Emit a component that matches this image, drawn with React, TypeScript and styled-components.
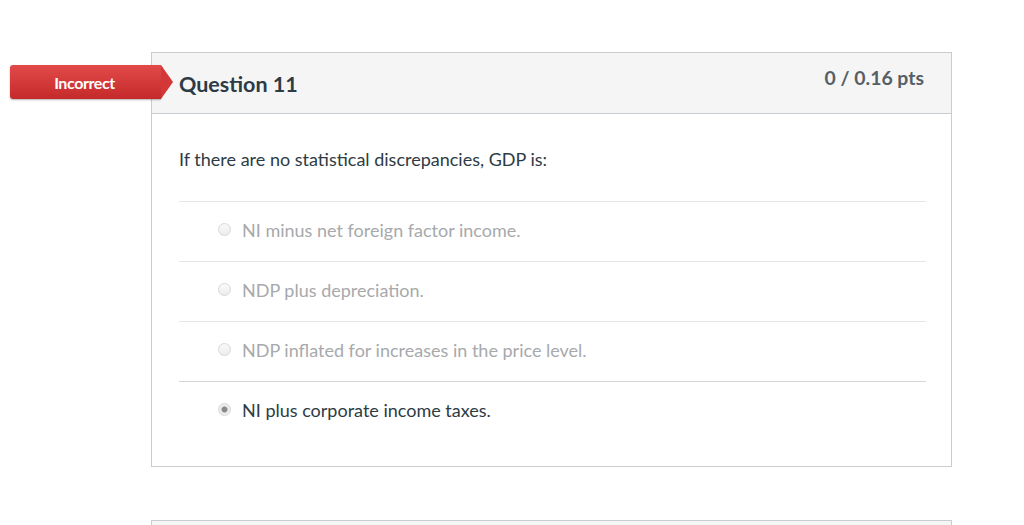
import React from "react";
import styled, { createGlobalStyle } from "styled-components";

const GlobalStyle = createGlobalStyle`
    body {
        margin: 0;
        background: #fff;
        font-family: Lato, "Open Sans", sans-serif;
        color: #2d3b45;
    }
`;

type Answer = { text: string; selected?: boolean };

const answers: Answer[] = [
    { text: "NI minus net foreign factor income." },
    { text: "NDP plus depreciation." },
    { text: "NDP inflated for increases in the price level." },
    { text: "NI plus corporate income taxes.", selected: true },
];

function App() {
    return (
        <Page>
            <GlobalStyle />
            <Card>
                <Badge>Incorrect</Badge>
                <Header>
                    <Title>Question 11</Title>
                    <Points>0 / 0.16 pts</Points>
                </Header>
                <Body>
                    <QuestionText>
                        If there are no statistical discrepancies, GDP is:
                    </QuestionText>
                    <AnswerList>
                        {answers.map((a) => (
                            <AnswerRow key={a.text}>
                                <Radio $selected={!!a.selected} />
                                <AnswerText $selected={!!a.selected}>
                                    {a.text}
                                </AnswerText>
                            </AnswerRow>
                        ))}
                    </AnswerList>
                </Body>
            </Card>
            <NextCard />
        </Page>
    );
}

export default App;

const Page = styled.div`
    display: flex;
    flex-direction: column;
    gap: 53px;
    padding: 52px 0 0 151px;
    height: 525px;
    box-sizing: border-box;
    overflow: hidden;
`;

const Card = styled.div`
    position: relative;
    width: 801px;
    box-sizing: border-box;
    border: 1px solid #c7cdd1;
    flex-shrink: 0;
`;

const Badge = styled.div`
    position: absolute;
    left: -142px;
    top: 12px;
    width: 151px;
    height: 34px;
    box-sizing: border-box;
    padding-right: 2px;
    display: flex;
    align-items: center;
    justify-content: center;
    background: linear-gradient(#e24a4a, #c52a2a);
    border-radius: 3px 0 0 3px;
    color: #fff;
    font-size: 16px;
    font-weight: 700;
    letter-spacing: -0.4px;
    box-shadow: 0 1px 2px rgba(0, 0, 0, 0.3);
    &::after {
        content: "";
        position: absolute;
        right: -12px;
        top: 0;
        border-top: 17px solid transparent;
        border-bottom: 17px solid transparent;
        border-left: 12px solid #d33737;
    }
`;

const Header = styled.div`
    display: flex;
    justify-content: space-between;
    align-items: flex-start;
    height: 61px;
    box-sizing: border-box;
    padding: 13px 26px 0 27px;
    background: #f5f5f5;
    border-bottom: 1px solid #c7cdd1;
`;

const Title = styled.div`
    font-size: 21.5px;
    font-weight: 700;
    margin-top: 5px;
    color: #2d3b45;
`;

const Points = styled.div`
    font-size: 19.4px;
    font-weight: 700;
    color: #565f66;
    margin-right: 1px;
`;

const Body = styled.div`
    padding: 34px 25px 25px 27px;
`;

const QuestionText = styled.div`
    font-size: 18px;
    line-height: 22px;
    margin-bottom: 31px;
`;

const AnswerList = styled.div`
    display: flex;
    flex-direction: column;
`;

const AnswerRow = styled.div`
    display: flex;
    align-items: center;
    height: 59px;
    box-sizing: content-box;
    padding: 0 0 0 39px;
    border-top: 1px solid #e6e6e6;
    &:nth-child(n + 2):last-child {
        border-top-color: #d6d6d6;
    }
`;

const Radio = styled.span<{ $selected: boolean }>`
    width: 13px;
    height: 13px;
    box-sizing: border-box;
    border-radius: 50%;
    border: 1px solid #d8d8d8;
    background: ${(p) =>
        p.$selected
            ? "radial-gradient(circle, #8a8a8a 0 2.5px, #ececec 3.5px)"
            : "linear-gradient(#fafafa, #ececec)"};
    margin: 0 11px 4px 0;
    flex-shrink: 0;
`;

const AnswerText = styled.span<{ $selected: boolean }>`
    font-size: 18px;
    margin-bottom: 4px;
    color: ${(p) => (p.$selected ? "#2d3b45" : "#a7a9ab")};
`;

const NextCard = styled.div`
    width: 801px;
    height: 40px;
    box-sizing: border-box;
    border: 1px solid #c7cdd1;
    background: #f5f5f5;
    flex-shrink: 0;
`;
